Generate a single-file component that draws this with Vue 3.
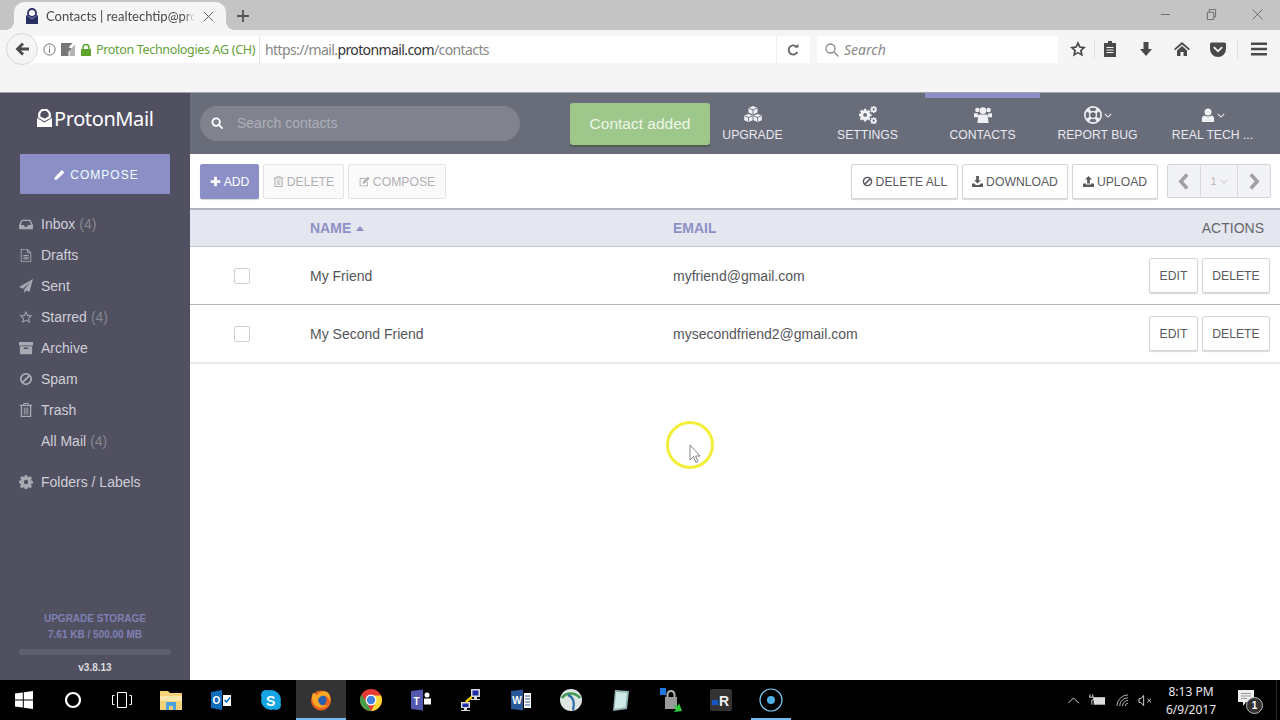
<template>
  <div class="screen">
    <div class="tabstrip">
      <div class="tab">
        <svg class="favicon" viewBox="0 0 12 16"><path fill="#2a2f66" d="M0 7l6 4 6-4v9H0z" /><path fill="none" stroke="#2a2f66" stroke-width="1.800" d="M2 7V5a4 4 0 0 1 8 0v2l-4 2.500z" /></svg>
        <span class="tab-title">Contacts | realtechtip@prot</span>
        <svg class="tab-close" viewBox="0 0 12 12"><path d="M1 1l10 10M11 1L1 11" /></svg>
      </div>
      <svg class="tab-new" viewBox="0 0 12 12"><path d="M6 0v12M0 6h12" /></svg>
      <div class="win-controls">
        <svg viewBox="0 0 12 12"><path d="M1 6h10" /></svg>
        <svg viewBox="0 0 12 12"><path d="M1.500 3.500h7v8h-7zM3.500 3.500v-3h7v8h-2" /></svg>
        <svg viewBox="0 0 12 12"><path d="M.5.5l11 11M11.500.5l-11 11" /></svg>
      </div>
    </div>

    <div class="navbar">
      <div class="back-btn">
        <svg viewBox="0 0 16 16"><path d="M8 1.500l2 2L7 6.500h8v3H7l3 3-2 2L1.500 8z" /></svg>
      </div>
      <div class="urlbar">
        <svg class="ub-info" viewBox="0 0 14 14"><circle cx="7" cy="7" r="6" /><path d="M7 6v4.500M7 3.200v1.600" /></svg>
        <svg class="ub-shield" viewBox="0 0 14 14"><path d="M0 1h11L7 5l3 1-3 3v4H0z" /><path d="M8 8l5-6v11H8z" fill-opacity=".55" /></svg>
        <svg class="ub-lock" viewBox="0 0 10 12"><path fill="#5fa52c" d="M0 5h10v7H0z" /><path fill="none" stroke="#5fa52c" stroke-width="1.600" d="M2 5.500V3.500a3 3 0 0 1 6 0v2" /></svg>
        <span class="ub-org">Proton Technologies AG (CH)</span>
        <span class="ub-url">https://mail.<b>protonmail.com</b>/contacts</span>
        <svg class="ub-reload" viewBox="0 0 12 12"><path d="M10 3.200A4.600 4.600 0 1 0 10.400 8" /><path class="solid" d="M7 3.500h4.500V0z" /></svg>
      </div>
      <div class="searchbar">
        <svg viewBox="0 0 14 14"><circle cx="5.500" cy="5.500" r="4.500" /><path d="M9 9l4.500 4.500" /></svg>
        <span>Search</span>
      </div>
      <div class="browser-tools">
        <svg viewBox="0 0 16 16"><path fill-rule="evenodd" d="M8 0l2.400 5.200 5.600.7-4.100 3.900 1.100 5.600-5-2.800-5 2.800 1.100-5.600L0 5.900l5.600-.7zM8 3.900 6.800 6.800l-3.100.4 2.300 2.100-.6 3.100L8 10.800l2.600 1.600-.6-3.100 2.300-2.100-3.100-.4z" /></svg>
        <i class="tool-sep"></i>
        <svg viewBox="0 0 16 16"><path fill-rule="evenodd" d="M6 0h4v2h4v14H2V2h4zM4.500 6v1h7V6zM4.500 8.500v1h7v-1zM4.500 11v1h7v-1z" /></svg>
        <svg viewBox="0 0 16 16"><path d="M5.500 1h5v7H14l-6 7-6-7h3.500z" /></svg>
        <svg viewBox="0 0 16 16"><path d="M8 1l8 7-1.200 1.200L8 3.400 1.200 9.200 0 8zM8 5l5 4.400V15H9.500v-4h-3v4H3V9.400z" /></svg>
        <svg viewBox="0 0 16 16"><path fill-rule="evenodd" d="M1.500 1.500h13A1.500 1.500 0 0 1 16 3v5A8 8 0 0 1 0 8V3a1.500 1.500 0 0 1 1.500-1.500zM4.500 5.500 3.200 6.800 8 11.500l4.800-4.700-1.300-1.300L8 9z" /></svg>
        <i class="tool-sep tool-sep--wide"></i>
        <svg viewBox="0 0 16 16"><path d="M0 1.500h16v2.500H0zM0 6.800h16v2.500H0zM0 12h16v2.500H0z" /></svg>
      </div>
    </div>

    <div class="app">
      <aside class="sidebar">
        <div class="logo">
          <svg viewBox="0 0 15 18"><path fill="#fff" d="M0 9l7.500 4.500L15 9v9H0z" /><path fill="none" stroke="#fff" stroke-width="2.200" d="M2.200 8V6a5.300 5.300 0 0 1 10.600 0v2l-5.300 3z" /></svg>
          <span>ProtonMail</span>
        </div>
        <div class="compose">
          <svg viewBox="0 0 16 16"><path :d="icons.pencil" /></svg>
          COMPOSE
        </div>
        <ul class="menu">
          <li v-for="item in menu" :key="item.label" :class="{ 'menu-gap': item.gap }">
            <svg viewBox="0 0 16 16"><path v-if="item.icon" fill-rule="evenodd" :d="icons[item.icon]" /></svg>
            <span class="menu-label">{{ item.label }}</span>
            <span v-if="item.count" class="menu-count">({{ item.count }})</span>
          </li>
        </ul>
        <div class="storage">
          <div>UPGRADE STORAGE</div>
          <div>7.61 KB / 500.00 MB</div>
          <div class="storage-bar"></div>
          <div class="version">v3.8.13</div>
        </div>
      </aside>

      <main class="main">
        <header class="topbar">
          <div class="search-pill">
            <svg viewBox="0 0 14 14"><circle cx="5.500" cy="5.500" r="4" /><path d="M8.500 8.500l4 4" /></svg>
            <span>Search contacts</span>
          </div>
          <nav class="topnav">
            <div v-for="nav in navItems" :key="nav.label" class="topnav-item" :class="{ 'topnav-item--active': nav.active }">
              <div class="topnav-icon">
                <svg :class="nav.cls" viewBox="0 0 16 16">
                  <template v-if="nav.icon === 'cubes'">
                    <path d="M8 0l4 1.700v4L8 7.500 4 5.700v-4z" /><path d="M4 7l3.600 1.500v4.200L4 14.300.2 12.700V8.500z" /><path d="M12 7l3.800 1.500v4.200L12 14.300l-3.600-1.600V8.500z" />
                    <path class="cube-edge" d="M4.500 2l3.500 1.500L11.500 2M8 3.500v3.500M.7 8.800 4 10.200l3.300-1.400M4 10.200v3.500M8.700 8.800l3.300 1.400 3.300-1.400M12 10.200v3.500" />
                  </template>
                  <template v-else-if="nav.icon === 'cogs'">
                    <path fill-rule="evenodd" transform="translate(0 2.500) scale(.68)" :d="icons.cog" />
                    <path fill-rule="evenodd" transform="translate(10 0) scale(.38)" :d="icons.cog" />
                    <path fill-rule="evenodd" transform="translate(10 10) scale(.38)" :d="icons.cog" />
                  </template>
                  <template v-else-if="nav.icon === 'users'">
                    <circle cx="3" cy="3.500" r="2" /><circle cx="13" cy="3.500" r="2" /><circle cx="8" cy="4" r="3" />
                    <path d="M0 6.500h3l1 3.500H0zM16 6.500h-3l-1 3.500h4zM4 7.500h8l1 7.500H3z" />
                  </template>
                  <template v-else-if="nav.icon === 'lifering'">
                    <path fill-rule="evenodd" d="M8 0a8 8 0 1 0 0 16A8 8 0 0 0 8 0zm0 1.500c1.200 0 2.300.3 3.200.9L9.700 4.700a4 4 0 0 0-3.400 0L4.800 2.400c.9-.6 2-.9 3.200-.9zM8 5.500a2.500 2.500 0 1 1 0 5 2.500 2.500 0 0 1 0-5zM2.400 4.800l2.300 1.500a4 4 0 0 0 0 3.400l-2.300 1.500a6.500 6.500 0 0 1 0-6.400zm11.200 0a6.500 6.500 0 0 1 0 6.400l-2.300-1.500a4 4 0 0 0 0-3.400zM6.300 11.300a4 4 0 0 0 3.400 0l1.500 2.300a6.500 6.500 0 0 1-6.400 0z" />
                  </template>
                  <template v-else>
                    <circle cx="8" cy="4.500" r="4" /><path d="M3.500 8.500c2.500 1.500 6.500 1.500 9 0 1.500.5 2.500 2 2.500 4v3.500H1v-3.500c0-2 1-3.500 2.500-4z" />
                  </template>
                </svg>
                <svg v-if="nav.caret" class="caret" viewBox="0 0 10 6"><path d="M1 1l4 4 4-4" /></svg>
              </div>
              <div class="topnav-label">{{ nav.label }}</div>
            </div>
          </nav>
          <div class="toast">Contact added</div>
        </header>

        <div class="toolbar">
          <button class="btn btn--primary">
            <svg viewBox="0 0 16 16"><path :d="icons.plus" /></svg>ADD
          </button>
          <button class="btn btn--disabled">
            <svg viewBox="0 0 16 16"><path fill-rule="evenodd" :d="icons.trash" /></svg>DELETE
          </button>
          <button class="btn btn--disabled">
            <svg viewBox="0 0 16 16"><path fill-rule="evenodd" :d="icons.edit" /></svg>COMPOSE
          </button>
          <span class="toolbar-space"></span>
          <button class="btn btn--r1">
            <svg viewBox="0 0 16 16"><path fill-rule="evenodd" :d="icons.ban" /></svg>DELETE ALL
          </button>
          <button class="btn btn--r2">
            <svg viewBox="0 0 16 16"><path :d="icons.download" /></svg>DOWNLOAD
          </button>
          <button class="btn btn--r3">
            <svg viewBox="0 0 16 16"><path :d="icons.upload" /></svg>UPLOAD
          </button>
          <div class="pager">
            <span class="pager-arrow"><svg viewBox="0 0 10 16"><path d="M8 1.500L2 8l6 6.500" /></svg></span>
            <span class="pager-num">1<svg viewBox="0 0 10 6"><path d="M1 1l4 4 4-4" /></svg></span>
            <span class="pager-arrow pager-arrow--last"><svg viewBox="0 0 10 16"><path d="M2 1.500L8 8l-6 6.500" /></svg></span>
          </div>
        </div>

        <div class="table">
          <div class="row row--head">
            <span></span>
            <span class="th">NAME <i class="sort-caret"></i></span>
            <span class="th">EMAIL</span>
            <span class="th-actions">ACTIONS</span>
          </div>
          <div v-for="(contact, i) in contacts" :key="contact.email" class="row" :class="i === 0 ? 'row--first' : 'row--last'">
            <span class="check"><i></i></span>
            <span>{{ contact.name }}</span>
            <span>{{ contact.email }}</span>
            <span class="actions">
              <button class="btn btn--small btn--edit">EDIT</button>
              <button class="btn btn--small btn--del">DELETE</button>
            </span>
          </div>
        </div>
      </main>
    </div>

    <footer class="taskbar">
      <div v-for="app in taskApps" :key="app.id" class="task-app" :class="{ 'task-app--active': app.active, 'task-app--open': app.open }">
        <svg viewBox="0 0 24 24">
          <template v-if="app.id === 'win'">
            <path fill="#fff" d="M3 5.500l7.800-1.100v7.100H3zM11.800 4.300L21 3v8.500h-9.200zM3 12.500h7.800v7.100L3 18.500zM11.800 12.500H21V21l-9.200-1.300z" />
          </template>
          <template v-else-if="app.id === 'cortana'">
            <circle cx="12" cy="12" r="7" fill="none" stroke="#fff" stroke-width="2.200" />
          </template>
          <template v-else-if="app.id === 'view'">
            <path fill="none" stroke="#fff" d="M7.500 4.500h9v15h-9zM4.500 7.500H2.500v9h2M19.500 7.500h2v9h-2" />
          </template>
          <template v-else-if="app.id === 'files'">
            <path fill="#f5d27a" d="M1 3h8l2 2h12v17H1z" /><path fill="#fbe7ad" d="M1 8h22v5H1z" /><path fill="#4aa3df" d="M7 14h10v8h-3v-4h-4v4H7z" />
          </template>
          <template v-else-if="app.id === 'outlook'">
            <path fill="#0f6cbd" d="M2 4l11-2v20L2 20z" /><path fill="#fff" d="M14 7h8v11h-8z" /><path fill="none" stroke="#0f6cbd" stroke-width="1.500" d="M15.500 12l2 2 3.500-4.500" />
            <text x="3.600" y="16" class="tk-letter" fill="#fff">O</text>
          </template>
          <template v-else-if="app.id === 'skype'">
            <circle cx="12" cy="12" r="10" fill="#16a6e6" /><circle cx="7" cy="7" r="5" fill="#16a6e6" /><circle cx="17" cy="17" r="5" fill="#16a6e6" />
            <text x="7" y="17.500" class="tk-letter tk-letter--big" fill="#fff">S</text>
          </template>
          <template v-else-if="app.id === 'firefox'">
            <circle cx="12" cy="12.500" r="10" fill="#e8611e" /><circle cx="12" cy="12" r="5.500" fill="#2a5fb0" />
            <path fill="#f9a825" d="M4 5c2 0 2 2 4 2 2-3 7-5 10-3 3 2 4 6 3 10-1-4-4-7-8-6-4 1-5 5-2 8 2 2 6 2 9 0-3 4-9 5-13 2C3 15 2 9 4 5z" />
          </template>
          <template v-else-if="app.id === 'chrome'">
            <circle cx="12" cy="12" r="11" fill="#e53935" />
            <path fill="#43a047" d="M12 23A11 11 0 0 1 2.500 6.500L8 16l4 7z" /><path fill="#fdd835" d="M12 23c6 0 11-5 11-11 0-1.500-.3-3-.9-4.500H12l4 8z" />
            <circle cx="12" cy="12" r="5.500" fill="#fff" /><circle cx="12" cy="12" r="4.200" fill="#3f82e0" />
          </template>
          <template v-else-if="app.id === 'teams'">
            <path fill="#5558af" d="M2 3l12-1.500v21L2 21z" /><circle cx="18" cy="7" r="2.500" fill="#fff" /><path fill="#fff" d="M15 10.500h7v6h-7z" />
            <text x="4.500" y="16.500" class="tk-letter" fill="#fff">T</text>
          </template>
          <template v-else-if="app.id === 'network'">
            <path fill="#d8d8d8" d="M12 1h9v8h-3v2h3v1h-9v-1h3V9h-3zM2 14h9v6H8v2h3v1H2v-1h3v-2H2z" /><path fill="#1c2fa8" d="M13.500 2.500h6v5h-6zM3.500 15.500h6v3.500h-6z" /><path fill="#f5d000" d="M6 13l6-5 1.500 2-6 5z" />
          </template>
          <template v-else-if="app.id === 'word'">
            <path fill="#2b579a" d="M2 3l12-1.500v21L2 21z" /><path fill="#fff" d="M15 5h7v15h-7z" /><path fill="none" stroke="#2b579a" d="M16 8h5M16 11h5M16 14h5M16 17h5" />
            <text x="3.200" y="16" class="tk-letter" fill="#fff">W</text>
          </template>
          <template v-else-if="app.id === 'globe'">
            <circle cx="12" cy="12" r="11" fill="#dfe5e0" /><path fill="none" stroke="#3d9a52" stroke-width="2.500" d="M3 10c4-6 13-6 18 0" /><path fill="none" stroke="#2b6cb0" stroke-width="2.200" d="M9 7c5 2 7 7 5 15" />
          </template>
          <template v-else-if="app.id === 'notes'">
            <path fill="#8fb4b0" d="M6 2l14 1-2 18-14 2z" /><path fill="#cfeae6" d="M7 4l11 .8-1.600 14.500L5.500 21z" />
          </template>
          <template v-else-if="app.id === 'vpn'">
            <path fill="#1e78e0" d="M1 0h6v7H1z" /><path fill="#9a9a9a" d="M6 9h12v12H6z" /><path fill="none" stroke="#b5b5b5" stroke-width="2" d="M8.500 9V6.500a3.500 3.500 0 0 1 7 0V9" /><path fill="#2ecc40" d="M15 17l4 1 1-3 3 8-8 1 2-3z" />
          </template>
          <template v-else-if="app.id === 'r'">
            <rect x="1" y="1" width="22" height="22" rx="2" fill="#333" /><path fill="#1658c8" d="M3 12h6v5H3z" />
            <text x="10" y="18" class="tk-letter tk-letter--big" fill="#eee">R</text>
          </template>
          <template v-else>
            <circle cx="12" cy="12" r="11" fill="none" stroke="#78c4ea" stroke-width="1.200" /><circle cx="12" cy="12" r="4" fill="#4eb0e6" />
          </template>
        </svg>
      </div>
      <div class="tray">
        <svg class="tray-caret" viewBox="0 0 14 8"><path d="M1 7l6-6 6 6" /></svg>
        <svg class="tray-power" viewBox="0 0 18 12"><path fill="#ddd" d="M5 3h12v8H5z" /><path fill="none" stroke="#ddd" d="M1 0v3M4 0v3M0 3h5v3H3v5" /></svg>
        <svg class="tray-wifi" viewBox="0 0 14 14"><path d="M1 13A12 12 0 0 1 13 1M4 13a9 9 0 0 1 9-9M7 13a6 6 0 0 1 6-6M10 13a3 3 0 0 1 3-3" /></svg>
        <svg class="tray-sound" viewBox="0 0 16 14"><path d="M1 5h2l3-3.500v11L3 9H1zM10 5l4 4M14 5l-4 4" /></svg>
        <div class="clock"><div>8:13 PM</div><div>6/9/2017</div></div>
        <div class="notify">
          <svg viewBox="0 0 18 18"><path fill="#eee" d="M1 1h16v12H9l-3 4v-4H1z" /><path stroke="#999" d="M4 4.500h10M4 7h10M4 9.500h6" /></svg>
          <span class="notify-badge">1</span>
        </div>
        <i class="show-desktop"></i>
      </div>
    </footer>

    <div class="cursor-ring">
      <svg viewBox="0 0 12 20"><path d="M1 1v15l3.500-3.500 2.500 6 2-1-2.500-5.500H11z" /></svg>
    </div>
  </div>
</template>

<script setup>
const icons = {
  star: 'M8 .8l2.200 4.800 5.200.6-3.900 3.500 1.100 5.200L8 12.200l-4.600 2.700 1.100-5.200L.6 6.200l5.200-.6zM8 3.600 6.600 6.800l-3.400.4 2.500 2.300-.7 3.400L8 11.100l3 1.800-.7-3.400 2.500-2.300-3.400-.4z',
  inbox: 'M3 3h10l3 6v4a1 1 0 0 1-1 1H1a1 1 0 0 1-1-1V9zM3.800 4.500 2 9h3.500l1 2h3l1-2H14l-1.800-4.500z',
  file: 'M2 1h8l4 4v11H2zM3 2v13h10V6H9V2zM10 2.500V5h2.500zM5 8h6v1H5zM5 10h6v1H5zM5 12h6v1H5z',
  plane: 'M16 0 0 9l4.500 2L13 3 6 12v4l2.500-3 3.500 1.500z',
  archive: 'M0 1h16v4H0zM1 6h14v9H1zM5.500 7.500V9h5V7.500z',
  ban: 'M8 1a7 7 0 1 0 0 14A7 7 0 0 0 8 1zM8 3c1 0 1.900.3 2.700.8L3.800 10.700A5 5 0 0 1 8 3zm0 10c-1 0-1.900-.3-2.700-.8l6.900-6.900A5 5 0 0 1 8 13z',
  trash: 'M5.500 0h5l1 2H15v1.500h-1V16H2V3.500H1V2h3.500zM6 1l-.2 1h4.400L10 1zM3.500 3.500v11h9v-11zM5.500 5h1v8h-1zM7.500 5h1v8h-1zM9.500 5h1v8h-1z',
  cog: 'M6.600 0h2.800l.4 2.100 1.300.5 1.800-1.200 2 2-1.200 1.800.5 1.300 2.100.4v2.800l-2.100.4-.5 1.300 1.200 1.800-2 2-1.800-1.200-1.300.5-.4 2.100H6.600l-.4-2.100-1.300-.5-1.800 1.200-2-2 1.200-1.800-.5-1.300L-.1 9.400V6.600l2.100-.4.5-1.300-1.200-1.800 2-2 1.800 1.200 1.300-.5zM8 5.500a2.500 2.500 0 1 0 0 5 2.500 2.500 0 0 0 0-5z',
  pencil: 'M11.500 1.500 15 5 5 15l-4.500 1 1-4.500z',
  plus: 'M6 1h4v5h5v4h-5v5H6v-5H1V6h5z',
  edit: 'M1 3h9L8.800 4.300H2.300v9.400h9.400V9L13 7.700V15H1zM13 1l2.500 2.500L8 11H5.500V8.500z',
  download: 'M6 0h4v6h3l-5 5-5-5h3zM0 11h3.500l2 2h5l2-2H16v5H0z',
  upload: 'M8 0l5 5h-3v6H6V5H3zM0 11h4.500v1.500h7V11H16v5H0z'
}

const menu = [
  { label: 'Inbox', icon: 'inbox', count: 4 },
  { label: 'Drafts', icon: 'file' },
  { label: 'Sent', icon: 'plane' },
  { label: 'Starred', icon: 'star', count: 4 },
  { label: 'Archive', icon: 'archive' },
  { label: 'Spam', icon: 'ban' },
  { label: 'Trash', icon: 'trash' },
  { label: 'All Mail', count: 4 },
  { label: 'Folders / Labels', icon: 'cog', gap: true }
]

const navItems = [
  { label: 'UPGRADE', icon: 'cubes' },
  { label: 'SETTINGS', icon: 'cogs' },
  { label: 'CONTACTS', icon: 'users', active: true },
  { label: 'REPORT BUG', icon: 'lifering', caret: true },
  { label: 'REAL TECH ...', icon: 'user', caret: true, cls: 'user-icon' }
]

const contacts = [
  { name: 'My Friend', email: 'myfriend@gmail.com' },
  { name: 'My Second Friend', email: 'mysecondfriend2@gmail.com' }
]

const taskApps = [
  { id: 'win' }, { id: 'cortana' }, { id: 'view' }, { id: 'files' }, { id: 'outlook' },
  { id: 'skype' }, { id: 'firefox', active: true }, { id: 'chrome' }, { id: 'teams' },
  { id: 'network' }, { id: 'word' }, { id: 'globe' }, { id: 'notes' }, { id: 'vpn' },
  { id: 'r' }, { id: 'record', open: true }
]
</script>

<style>
html, body { margin: 0; overflow: hidden; }
</style>

<style scoped>
.screen {
  position: relative;
  display: flex;
  flex-direction: column;
  width: 1280px;
  height: 720px;
  overflow: hidden;
  background: #fff;
  font-family: "Liberation Sans", Arial, sans-serif;
}

/* browser chrome */
.tabstrip {
  display: flex;
  align-items: flex-end;
  flex: 0 0 30px;
  background: #c4c4c4;
}
.tab {
  position: relative;
  display: flex;
  align-items: center;
  width: 212px;
  height: 28px;
  margin-left: 14px;
  padding-left: 12px;
  box-sizing: border-box;
  border-radius: 10px 10px 0 0;
  background: #f5f5f5;
}
.tab::before,
.tab::after {
  content: "";
  position: absolute;
  bottom: 0;
  width: 8px;
  height: 8px;
}
.tab::before {
  left: -8px;
  background: radial-gradient(circle at 0 0, transparent 7.500px, #f5f5f5 8px);
}
.tab::after {
  right: -8px;
  background: radial-gradient(circle at 100% 0, transparent 7.500px, #f5f5f5 8px);
}
.favicon { width: 12px; height: 16px; flex: none; }
.tab-title {
  width: 149px;
  margin-left: 8px;
  color: #4a4a4a;
  font: 13px Lato, sans-serif;
  white-space: nowrap;
  -webkit-mask-image: linear-gradient(90deg, #000 92%, transparent);
  mask-image: linear-gradient(90deg, #000 92%, transparent);
}
.tab-close {
  width: 11px;
  height: 11px;
  margin-left: 8px;
  fill: none;
  stroke: #555;
  stroke-width: 1;
}
.tab-new {
  width: 12px;
  height: 12px;
  margin: 0 0 8px 11px;
  fill: none;
  stroke: #555;
  stroke-width: 1.800;
}
.win-controls {
  display: flex;
  gap: 35px;
  margin-left: auto;
  padding-right: 17px;
  padding-bottom: 2px;
  align-self: center;
}
.win-controls svg {
  width: 11px;
  height: 11px;
  fill: none;
  stroke: #666;
  stroke-width: 1;
}
.navbar {
  display: flex;
  align-items: flex-start;
  flex: 0 0 62px;
  box-sizing: border-box;
  padding-top: 3px;
  background: #f5f5f5;
}
.back-btn {
  position: relative;
  z-index: 1;
  display: flex;
  align-items: center;
  justify-content: center;
  width: 32px;
  height: 32px;
  margin-left: 6px;
  box-sizing: border-box;
  border: 1px solid #d8d8d8;
  border-radius: 50%;
  background: #f5f5f5;
}
.back-btn svg { width: 16px; height: 16px; fill: #4c4c4c; }
.urlbar {
  display: flex;
  align-items: center;
  width: 782px;
  height: 27px;
  margin: 3px 0 0 -10px;
  padding-left: 15px;
  box-sizing: border-box;
  background: #fff;
  white-space: nowrap;
}
.ub-info { width: 13px; height: 13px; fill: none; stroke: #666; stroke-width: 1; }
.ub-shield { width: 15px; height: 15px; margin-left: 5px; fill: #777; }
.ub-lock { width: 10px; height: 12px; margin-left: 5px; }
.ub-org {
  width: 164px;
  margin-left: 5px;
  box-sizing: border-box;
  border-right: 1px solid #e4e4e4;
  color: #64a13a;
  font: 12.500px/27px "Noto Sans", sans-serif;
  letter-spacing: -0.330px;
}
.ub-url {
  width: 517px;
  padding-left: 5px;
  box-sizing: border-box;
  border-right: 1px solid #eee;
  color: #888;
  font: 14px/27px "Noto Sans", sans-serif;
  letter-spacing: -0.600px;
}
.ub-url b { color: #333; font-weight: 400; }
.ub-reload { width: 12px; height: 12px; margin-left: 10px; fill: none; stroke: #666; stroke-width: 1.800; }
.ub-reload .solid { fill: #666; stroke: none; }
.searchbar {
  display: flex;
  align-items: center;
  width: 241px;
  height: 27px;
  margin: 3px 0 0 7px;
  padding-left: 8px;
  box-sizing: border-box;
  background: #fff;
  color: #888;
  font: italic 14px "Noto Sans", sans-serif;
}
.searchbar svg { width: 14px; height: 14px; margin-right: 5px; fill: none; stroke: #888; stroke-width: 1.300; }
.browser-tools {
  display: flex;
  align-items: center;
  height: 32px;
  margin-left: 12px;
}
.browser-tools svg { width: 16px; height: 16px; margin-right: 20px; fill: #4a4a4a; }
.browser-tools svg:first-child { margin-right: 8px; }
.tool-sep { width: 1px; height: 20px; margin-right: 7px; background: #e2e2e2; }
.tool-sep--wide { margin: 0 13px 0 -9px; }
.browser-tools svg:last-child { margin-right: 0; }

/* app */
.app { display: flex; flex: 1; min-height: 0; border-top: 1px solid #a3a3ab; }
.sidebar {
  display: flex;
  flex-direction: column;
  flex: 0 0 190px;
  background: #505061;
}
.logo {
  display: flex;
  align-items: center;
  height: 52px;
  padding: 0 0 2px 37px;
  box-sizing: border-box;
  color: #fff;
  font: 20px "Noto Sans", sans-serif;
}
.logo svg { width: 15px; height: 18px; margin-right: 2px; }
.logo span { letter-spacing: -0.400px; }
.compose {
  display: flex;
  align-items: center;
  justify-content: center;
  gap: 5px;
  height: 40px;
  margin: 9px 20px 0;
  padding: 1px 0 0 3px;
  box-sizing: border-box;
  border-radius: 1px;
  background: #8c8fc6;
  color: #eff;
  font-size: 12px;
  letter-spacing: 1px;
}
.compose svg { width: 11px; height: 11px; fill: #fff; }
.menu { margin: 14px 0 0; padding: 0; list-style: none; }
.menu li {
  display: flex;
  align-items: center;
  height: 31px;
  padding-left: 19px;
  color: #cfcfd6;
  font-size: 14px;
}
.menu svg { width: 14px; height: 14px; margin-right: 8px; fill: #a9a9b3; }
.menu .menu-gap { margin-top: 10px; }
.menu-count { margin-left: 4px; color: #87878f; }
.storage {
  margin-top: auto;
  padding-bottom: 4px;
  color: #7f81b3;
  font-size: 10px;
  font-weight: 700;
  line-height: 16px;
  text-align: center;
}
.storage-bar {
  height: 6px;
  margin: 6px 19px 5px;
  border-radius: 3px;
  background: #5f5f6f;
}
.version { color: #ddd; }

.main { display: flex; flex-direction: column; flex: 1; min-width: 0; }
.topbar {
  position: relative;
  display: flex;
  flex: 0 0 61px;
  background: #696d7a;
}
.search-pill {
  display: flex;
  align-items: center;
  width: 320px;
  height: 35px;
  margin: 13px 0 0 10px;
  padding: 0 0 1px 11px;
  box-sizing: border-box;
  border-radius: 18px;
  background: #80838e;
  color: #adb0b8;
  font-size: 14px;
}
.search-pill svg { width: 13px; height: 13px; margin-right: 13px; fill: none; stroke: #fff; stroke-width: 2; }
.topnav { display: flex; margin-left: auto; padding-right: 10px; }
.topnav-item {
  position: relative;
  width: 115px;
  padding-top: 12px;
  box-sizing: border-box;
  color: #e8e8ee;
  text-align: center;
  font-size: 12.200px;
}
.topnav-item--active::before {
  content: "";
  position: absolute;
  top: 0;
  left: 0;
  right: 0;
  height: 5px;
  background: #8c8fc6;
}
.topnav-icon {
  display: flex;
  align-items: center;
  justify-content: center;
  gap: 2px;
  height: 20px;
  margin-bottom: 3px;
}
.topnav-icon svg { width: 18px; height: 18px; fill: #f0f0f4; }
.topnav-icon .cube-edge { fill: none; stroke: #696d7a; stroke-width: .8; }
.topnav-icon .user-icon { width: 14px; height: 14px; }
.topnav-icon .caret { width: 8px; height: 5px; fill: none; stroke: #f0f0f4; stroke-width: 1.300; }
.toast {
  position: absolute;
  top: 10px;
  left: 380px;
  width: 140px;
  height: 42px;
  border-radius: 3px;
  background: #9ec78c;
  box-shadow: 0 2px 0 #4f5c52;
  color: #eef6e8;
  font-size: 15.500px;
  line-height: 42px;
  text-align: center;
}

.toolbar {
  display: flex;
  gap: 4px;
  flex: 0 0 54px;
  box-sizing: border-box;
  padding: 10px 9px 0 10px;
}
.btn {
  display: inline-flex;
  align-items: center;
  justify-content: center;
  gap: 3px;
  height: 35px;
  padding: 0;
  box-sizing: border-box;
  border: 1px solid #d4d4d8;
  border-radius: 2px;
  background: #fff;
  box-shadow: 0 1px 1px rgba(0, 0, 0, 0.16);
  color: #5a5a60;
  font: 12.200px "Liberation Sans", Arial, sans-serif;
}
.btn svg { width: 11px; height: 11px; fill: currentColor; }
.btn--primary { width: 59px; border-color: #8c8fc6; background: #8c8fc6; color: #fff; }
.btn--disabled { width: 81px; background: #fafafa; box-shadow: none; color: #b0b0b4; border-color: #e4e4e6; }
.btn--disabled + .btn--disabled { width: 98px; }
.toolbar-space { flex: 1; }
.btn--r1 { width: 107px; }
.btn--r2 { width: 106px; }
.btn--r3 { width: 86px; }
.pager {
  display: flex;
  width: 104px;
  height: 34px;
  margin-left: 5px;
  box-sizing: border-box;
  border: 1px solid #d4d4da;
  border-radius: 2px;
  background: #f2f3f7;
}
.pager-arrow { display: flex; align-items: center; justify-content: center; width: 32px; border-right: 1px solid #d8d8de; }
.pager-arrow--last { border: 0; }
.pager-arrow svg { width: 12px; height: 17px; fill: none; stroke: #a0a0a6; stroke-width: 3.400; }
.pager-num {
  display: flex;
  align-items: center;
  justify-content: center;
  gap: 3px;
  flex: 1;
  border-right: 1px solid #d8d8de;
  color: #bbb;
  font-size: 11px;
}
.pager-num svg { width: 8px; height: 5px; fill: none; stroke: #bbb; }

.table { font-size: 14px; color: #55555a; }
.row {
  display: grid;
  grid-template-columns: 120px 363px 1fr auto;
  align-items: center;
  box-sizing: border-box;
}
.row--head {
  height: 39px;
  padding-bottom: 1px;
  border-top: 2px solid #b0b2c2;
  border-bottom: 1px solid #c6c8d0;
  background: #e4e7f0;
}
.th { color: #8e91c6; font-weight: 700; }
.sort-caret {
  display: inline-block;
  margin-left: 1px;
  border: 4px solid transparent;
  border-top: 0;
  border-bottom: 5px solid #8e91c6;
  vertical-align: 2px;
}
.th-actions { padding-right: 16px; color: #66666c; }
.row--first { height: 58px; border-bottom: 1px solid #b4b4c0; }
.row--last { height: 59px; border-bottom: 2px solid #e8e8ea; }
.check { padding-left: 44px; }
.check i {
  display: block;
  width: 16px;
  height: 16px;
  box-sizing: border-box;
  border: 1px solid #cfcfd2;
  border-radius: 2px;
}
.actions { display: flex; gap: 4px; padding-right: 10px; }
.btn--small { height: 35px; }
.btn--edit { width: 49px; }
.btn--del { width: 68px; }

/* taskbar */
.taskbar {
  display: flex;
  align-items: stretch;
  flex: 0 0 40px;
  background: #000;
}
.task-app {
  position: relative;
  display: flex;
  align-items: center;
  justify-content: center;
  flex: 0 0 50px;
  box-sizing: border-box;
}
.task-app:nth-child(-n+3) { flex-basis: 48.670px; }
.task-app svg { width: 24px; height: 24px; }
.task-app--active { background: #333; }
.task-app--active::after,
.task-app--open::after {
  content: "";
  position: absolute;
  left: 0;
  right: 0;
  bottom: 0;
  height: 2px;
  background: #76b9ed;
}
.task-app--open::after { left: 5px; right: 5px; }
.tk-letter { font: 700 10px "Liberation Sans", sans-serif; }
.tk-letter--big { font-size: 14px; }
.tray {
  display: flex;
  align-items: center;
  margin-left: auto;
  color: #e8e8e8;
}
.tray svg { flex: none; }
.tray-caret { width: 13px; height: 7px; fill: none; stroke: #ddd; stroke-width: 1.100; }
.tray-power { width: 17px; height: 12px; margin-left: 9px; }
.tray-wifi { width: 13px; height: 13px; margin-left: 10px; fill: none; stroke: #bbb; stroke-width: 1; }
.tray-sound { width: 15px; height: 13px; margin-left: 9px; fill: none; stroke: #ddd; stroke-width: 1; }
.clock {
  width: 60px;
  margin-left: 8px;
  padding-top: 2px;
  font: 12px/18px "Noto Sans", sans-serif;
  text-align: center;
}
.notify { position: relative; width: 20px; height: 22px; margin: 0 19px 0 16px; }
.notify svg { width: 18px; height: 18px; }
.notify-badge {
  position: absolute;
  left: 9px;
  top: 8px;
  width: 15px;
  height: 15px;
  border: 1px solid #bbb;
  border-radius: 50%;
  background: #333;
  color: #fff;
  font: 700 10px/15px "Liberation Sans", sans-serif;
  text-align: center;
}
.show-desktop { align-self: stretch; width: 1px; margin-right: 3px; background: #2c2c2c; }

.cursor-ring {
  position: absolute;
  left: 666px;
  top: 421px;
  width: 48px;
  height: 48px;
  box-sizing: border-box;
  border: 3px solid #f2ee3a;
  border-radius: 50%;
}
.cursor-ring svg {
  position: absolute;
  left: 20px;
  top: 20px;
  width: 12px;
  height: 20px;
  fill: #fff;
  stroke: #666;
  stroke-width: .8;
}
</style>
